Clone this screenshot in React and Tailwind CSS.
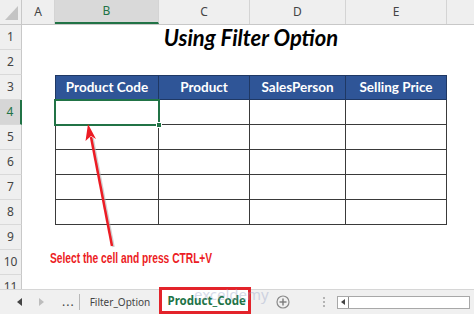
import React from "react";

const colW = ["w-[33px]", "w-[104px]", "w-[91px]", "w-[96px]", "w-[101px]"];
const headers = ["Product Code", "Product", "SalesPerson", "Selling Price"];

function RowHeader({ n, active }) {
  return (
    <div
      className={
        "w-[22px] h-full shrink-0 flex items-center justify-center text-[12px] border-b border-[#d9d9d9] " +
        (active
          ? "bg-[#d6d6d6] text-[#217346] border-r-2 border-r-[#217346]"
          : "bg-[#efefef] text-[#444] border-r border-r-[#c8c8c8]")
      }
    >
      {n}
    </div>
  );
}

function TableRow({ n, header }) {
  return (
    <div className="flex h-[25px]">
      <RowHeader n={n} active={n === 4} />
      <div className="w-[33px] shrink-0" />
      {headers.map((h, i) => (
        <div
          key={i}
          className={
            colW[i + 1] +
            " shrink-0 box-border border-r border-b flex items-center justify-center " +
            (i === 0 ? "border-l " : "") +
            (header
              ? "border-t bg-[#2f5597] border-[#1f3864] text-white font-bold text-[13.5px]"
              : "border-[#3a3a3a] bg-white")
          }
          style={{ fontFamily: "Lato, 'Open Sans', sans-serif" }}
        >
          {header ? h : ""}
        </div>
      ))}
      <div className="flex-1" />
    </div>
  );
}

function EmptyRow({ n, children }) {
  return (
    <div className="flex h-[25px] shrink-0">
      <RowHeader n={n} />
      <div className="flex-1 relative">{children}</div>
    </div>
  );
}

export default function App() {
  const letters = ["A", "B", "C", "D", "E"];
  return (
    <div
      className="w-[474px] h-[314px] overflow-hidden flex flex-col bg-white"
      style={{ fontFamily: "'Noto Sans', 'Open Sans', sans-serif" }}
    >
      <div className="relative h-[289px] overflow-hidden shrink-0">
        {/* column headers */}
        <div className="flex h-[25px] bg-[#efefef] border-b border-[#c8c8c8]">
          <div className="w-[22px] shrink-0 border-r border-[#c8c8c8] relative">
            <svg width="22" height="24" className="absolute left-0 top-0">
              <polygon points="18,6 18,20 5,20" fill="#c4c4c4" />
            </svg>
          </div>
          {letters.map((l, i) => (
            <div
              key={l}
              className={
                colW[i] +
                " shrink-0 box-border flex items-center justify-center text-[12px] border-r border-[#d4d4d4] " +
                (l === "B"
                  ? "bg-[#d9d9d9] text-[#217346] border-b-2 border-b-[#217346]"
                  : "text-[#444]")
              }
            >
              {l}
            </div>
          ))}
          <div className="flex-1" />
        </div>

        <EmptyRow n={1}>
          <div className="absolute left-[33px] w-[392px] top-0 h-full flex items-center justify-center">
            <span
              className="text-[22px] font-bold italic text-black leading-none"
              style={{ fontFamily: "Lato, 'Open Sans', sans-serif" }}
            >
              Using Filter Option
            </span>
          </div>
        </EmptyRow>
        <EmptyRow n={2} />
        <TableRow n={3} header />
        <TableRow n={4} />
        <TableRow n={5} />
        <TableRow n={6} />
        <TableRow n={7} />
        <TableRow n={8} />
        <EmptyRow n={9} />
        <EmptyRow n={10} />
        <EmptyRow n={11} />

        {/* selection */}
        <div className="absolute left-[54px] top-[99px] w-[106px] h-[27px] border-2 border-[#217346] pointer-events-none" />
        <div className="absolute left-[156px] top-[122px] w-[6px] h-[6px] bg-[#217346] border border-white" />

        {/* arrow */}
        <svg className="absolute left-0 top-0 pointer-events-none" width="474" height="289">
          <line x1="113.5" y1="247" x2="92.5" y2="138" stroke="#b0b0b0" strokeWidth="2.5" opacity="0.6" />
          <line x1="112" y1="246" x2="91" y2="137" stroke="#ec1c24" strokeWidth="2.5" />
          <polygon points="88,124 96,139 91,136 85.5,141" fill="#ec1c24" />
        </svg>

        {/* annotation */}
        <div
          className="absolute left-[50px] top-[251px] text-[14px] font-bold text-[#ec1c24] origin-left scale-x-[0.73] whitespace-nowrap leading-none"
          style={{ fontFamily: "'Liberation Sans Narrow', 'Liberation Sans', sans-serif" }}
        >
          Select the cell and press CTRL+V
        </div>
      </div>

      {/* sheet tabs */}
      <div className="relative h-[25px] bg-[#f0f0f0] border-t border-[#d6d6d6] flex items-center text-[12px]">
        <div className="w-[14px]" />
        <div className="w-[12px] flex justify-center">
          <svg width="6" height="8"><polygon points="5,0 5,8 0,4" fill="#444" /></svg>
        </div>
        <div className="w-[10px]" />
        <div className="w-[12px] flex justify-center">
          <svg width="6" height="8"><polygon points="0,0 0,8 5,4" fill="#bdbdbd" /></svg>
        </div>
        <div className="w-[14px]" />
        <span className="text-[#444] text-[12px] leading-none tracking-[1px]">...</span>
        <div className="w-[4px]" />
        <div className="w-px h-[16px] bg-[#b8b8b8]" />
        <div className="w-[10px]" />
        <span className="text-[#444] text-[10px]">Filter_Option</span>
        <div className="w-[9px]" />
        <div className="relative self-end h-[27px] -mt-[2px] w-[92px] bg-white border-[3px] border-[#e3232a] flex items-center justify-center">
          <span className="text-[#217346] font-bold text-[11.5px] pl-[3px]">Product_Code</span>
        </div>
        <span className="absolute left-[194px] top-[-7px] text-[15px] text-[#9aa5c8] opacity-40 pointer-events-none">
          exceldemy
        </span>
        <div className="w-[25px]" />
        <svg width="14" height="14" viewBox="0 0 14 14">
          <circle cx="7" cy="7" r="6" fill="none" stroke="#8a8a8a" strokeWidth="1.2" />
          <line x1="7" y1="3.5" x2="7" y2="10.5" stroke="#7a7a7a" strokeWidth="1.4" />
          <line x1="3.5" y1="7" x2="10.5" y2="7" stroke="#7a7a7a" strokeWidth="1.4" />
        </svg>
        <div className="w-[32px]" />
        <svg width="4" height="12">
          <circle cx="2" cy="2" r="1" fill="#a0a0a0" />
          <circle cx="2" cy="6" r="1" fill="#a0a0a0" />
          <circle cx="2" cy="10" r="1" fill="#a0a0a0" />
        </svg>
        <div className="w-[11px]" />
        <div className="w-[133px] h-[13px] bg-white border border-[#a8a8a8] flex items-center">
          <div className="w-[11px] h-full border-r border-[#8a8a8a] flex items-center justify-center">
            <svg width="4" height="6"><polygon points="4,0 4,6 0,3" fill="#444" /></svg>
          </div>
        </div>
      </div>
    </div>
  );
}
